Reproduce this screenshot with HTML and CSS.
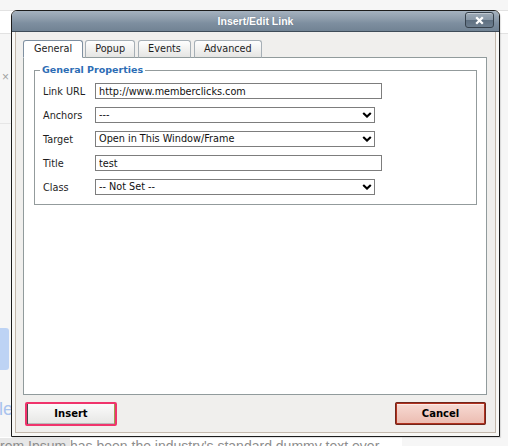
FILE: index.html
```html
<!DOCTYPE html>
<html lang="en">
<head>
<meta charset="utf-8">
<title>Insert/Edit Link</title>
<link rel="stylesheet" href="styles.css">
</head>
<body>
<div class="page">
  <div class="strip"></div>
  <div class="bg-x">×</div>
  <div class="bg-rule"></div>
  <div class="bg-block"></div>
  <div class="bg-heading">le</div>
  <p class="bg-text"><span class="hl">rem Ipsum </span>has been the industry's standard dummy text ever</p>
</div>

<div class="dialog" role="dialog" aria-label="Insert/Edit Link">
  <div class="titlebar">
    <span></span>
    <span class="title">Insert/Edit Link</span>
    <button class="close" type="button" aria-label="Close">
      <svg width="9" height="9" viewBox="0 0 9 9"><path d="M1.2 1.2 L7.8 7.8 M7.8 1.2 L1.2 7.8" stroke="#fff" stroke-width="2.3" fill="none"/></svg>
    </button>
  </div>
  <div class="dlg-body">
    <div class="inner">
      <div class="tabs">
        <span class="tab active">General</span>
        <span class="tab">Popup</span>
        <span class="tab">Events</span>
        <span class="tab">Advanced</span>
      </div>
      <div class="panel">
        <fieldset class="props">
          <legend>General Properties</legend>
          <div class="form">
            <label for="href">Link URL</label>
            <input id="href" class="txt" type="text" value="http://www.memberclicks.com">

            <label for="anchors">Anchors</label>
            <span class="sel"><select id="anchors"><option>---</option></select><svg class="chev" width="10" height="6" viewBox="0 0 10 6"><path d="M1.2 1 L5 4.6 L8.8 1" stroke="#000" stroke-width="2.1" fill="none"/></svg></span>

            <label for="target">Target</label>
            <span class="sel"><select id="target"><option>Open in This Window/Frame</option></select><svg class="chev" width="10" height="6" viewBox="0 0 10 6"><path d="M1.2 1 L5 4.6 L8.8 1" stroke="#000" stroke-width="2.1" fill="none"/></svg></span>

            <label for="title">Title</label>
            <input id="title" class="txt" type="text" value="test">

            <label for="cls">Class</label>
            <span class="sel"><select id="cls"><option>-- Not Set --</option></select><svg class="chev" width="10" height="6" viewBox="0 0 10 6"><path d="M1.2 1 L5 4.6 L8.8 1" stroke="#000" stroke-width="2.1" fill="none"/></svg></span>
          </div>
        </fieldset>
      </div>
      <div class="actions">
        <button class="btn insert" type="button">Insert</button>
        <button class="btn cancel" type="button">Cancel</button>
      </div>
    </div>
  </div>
</div>
</body>
</html>
```

FILE: styles.css
```css
* { box-sizing: border-box; }

html, body {
  margin: 0;
  padding: 0;
  height: 100%;
  overflow: hidden;
}

body {
  background: #f6f6f6;
  font-family: "DejaVu Sans", Verdana, sans-serif;
  position: relative;
}

/* ---------- background page (partly hidden) ---------- */
.page {
  width: 508px;
}

.strip {
  margin-top: 10px;
  height: 24px;
  background: #ffffff;
  border-top: 1px solid #e2e2e2;
  border-bottom: 1px solid #e2e2e2;
}

.bg-x {
  margin-top: 38px;
  height: 10px;
  padding-left: 2px;
  font: 12px/10px "Liberation Sans", Arial, sans-serif;
  color: #a2a2a2;
}

.bg-rule {
  margin-top: 41px;
  width: 11px;
  height: 1px;
  background: #e6e6e6;
}

.bg-block {
  margin-top: 204px;
  width: 9px;
  height: 42px;
  background: #bdd3f4;
  border-radius: 0 3px 3px 0;
}

.bg-heading {
  margin-top: 30px;
  margin-left: -1px;
  height: 18px;
  font: 18px/18px "Liberation Sans", Arial, sans-serif;
  color: #a9c3ee;
}

.bg-text {
  margin: 19px 0 0;
  width: 402px;
  background: #ffffff;
  font: 14px/18px "Liberation Sans", Arial, sans-serif;
  color: #8d8d8d;
  white-space: nowrap;
}

.bg-text .hl {
  background: #e7e7e7;
}

/* ---------- dialog (modal overlay) ---------- */
.dialog {
  position: absolute;
  left: 11px;
  top: 10px;
  width: 489px;
  height: 427px;
  border: 1px solid #1c1c1c;
  border-radius: 6px 6px 0 0;
  background: #f8f8f6;
  display: flex;
  flex-direction: column;
  overflow: hidden;
  box-shadow: 1px 1px 1px rgba(0, 0, 0, 0.12);
}

.titlebar {
  height: 21px;
  flex: none;
  border-bottom: 1px solid #3e4b58;
  background: linear-gradient(#a5b2bf 0%, #8d9cab 40%, #7e8fa0 60%, #718394 100%);
  display: grid;
  grid-template-columns: 1fr auto 1fr;
  align-items: center;
}

.title {
  font: bold 10.5px/12px "Liberation Sans", Arial, sans-serif;
  color: #ffffff;
  text-shadow: 0 0 1px rgba(40, 55, 70, 0.35);
}

.close {
  justify-self: end;
  align-self: start;
  margin: 1px 5px 0 0;
  width: 29px;
  height: 16px;
  padding: 0;
  border: 1px solid #37424d;
  border-radius: 3px;
  background: linear-gradient(#9eabb8 0%, #8897a6 48%, #5e6f80 52%, #6d7e8f 100%);
  box-shadow: inset 0 1px 0 rgba(255, 255, 255, 0.35);
  display: flex;
  align-items: center;
  justify-content: center;
}

.close svg { display: block; }

.dlg-body {
  flex: 1;
  padding: 0 3px 3px;
  display: flex;
}

.inner {
  flex: 1;
  display: flex;
  flex-direction: column;
  border: 1px solid #c3b8ac;
  border-top: none;
  background: #f0efed;
  padding: 8px 8px 0 7px;
}

/* tabs */
.tabs {
  display: flex;
  align-items: flex-start;
  height: 17px;
  position: relative;
  z-index: 1;
}

.tab {
  height: 18px;
  padding: 0 9px;
  margin-right: 3px;
  border: 1px solid #a6afb6;
  border-bottom-color: #919b9c;
  border-radius: 3px 3px 0 0;
  background: linear-gradient(#fefefe, #e5e5e3);
  font-size: 9.7px;
  line-height: 16px;
  color: #1e1e1e;
  white-space: nowrap;
}

.tab.active {
  padding: 0 10px;
  margin-right: 2px;
  background: #ffffff;
  border-color: #7f90a1;
  border-bottom-color: #ffffff;
}

/* panel */
.panel {
  height: 338px;
  flex: none;
  border: 1px solid #919b9c;
  background: #ffffff;
  padding: 0 9px 0 10px;
}

.props {
  margin: 6px 0 0;
  padding: 7px 0 9px 8px;
  border: 1px solid #939b9c;
  min-width: 0;
}

.props legend {
  margin-left: -3px;
  padding: 0 2px;
  font: bold 9.5px/12px "DejaVu Sans", Verdana, sans-serif;
  color: #2d6db5;
}

.form {
  display: grid;
  grid-template-columns: 52px auto;
  row-gap: 8px;
  align-items: center;
  justify-items: start;
}

.form label {
  font-size: 9.7px;
  color: #1e1e1e;
}

.txt,
.sel select {
  height: 16px;
  margin: 0;
  padding: 0 3px;
  border: 1px solid #7d7d7d;
  border-radius: 0;
  background: #ffffff;
  font: 9.7px/14px "DejaVu Sans", Verdana, sans-serif;
  color: #111111;
  outline: none;
}

.txt { width: 287px; }

.sel {
  position: relative;
  display: block;
  width: 280px;
  height: 16px;
}

.sel select {
  width: 280px;
  appearance: none;
  -webkit-appearance: none;
  display: block;
}

.chev {
  position: absolute;
  right: 3px;
  top: 5px;
  pointer-events: none;
}

/* actions */
.actions {
  display: flex;
  justify-content: space-between;
  align-items: flex-start;
  padding: 7px 1px 0 2px;
}

.btn {
  margin: 0;
  padding: 0;
  font: bold 10px/1 "DejaVu Sans", Verdana, sans-serif;
  color: #000000;
  border-radius: 2px;
  cursor: pointer;
}

.insert {
  width: 92px;
  height: 24px;
  border: 2px solid #f0346c;
  background: linear-gradient(#fbfbfb, #e6e6e4);
  box-shadow: inset 1px 0 0 #4a4a4a, inset -1px 0 0 #9aa050, inset 0 -1px 0 #b9b9b9;
}

.cancel {
  width: 91px;
  height: 23px;
  border: 2px solid #b1321f;
  background: linear-gradient(#f7dad3, #ecbdb2);
  box-shadow: 0 0 0 0 transparent, inset 0 1px 0 rgba(255, 255, 255, 0.5);
  outline: 1px solid rgba(60, 30, 25, 0.55);
  outline-offset: -1px;
}
```
